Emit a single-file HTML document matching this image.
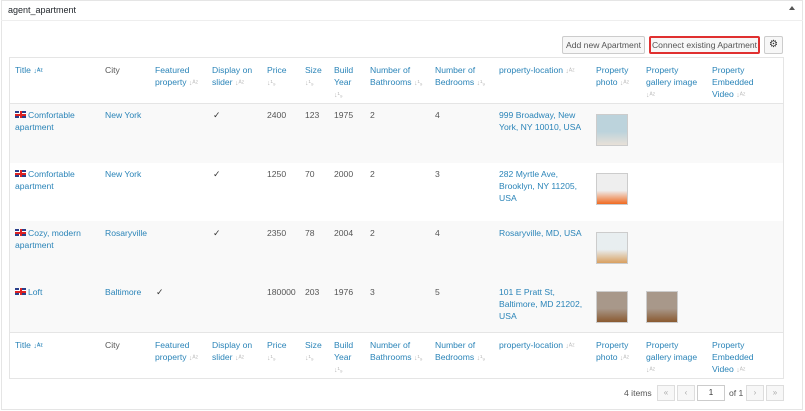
<!DOCTYPE html>
<html><head><style>
*{margin:0;padding:0;box-sizing:border-box}
body{width:805px;height:411px;background:#fff;font-family:"Liberation Sans",sans-serif;font-size:8.6px;color:#444;position:relative;overflow:hidden}
.a{position:absolute}
.panel{left:1px;top:0;width:802px;height:410px;border:1px solid #e5e5e5}
.hdr{left:1px;top:0;width:802px;height:21px;border-bottom:1px solid #eee}
.tbl{left:9px;top:57px;width:775px;height:322px;border:1px solid #e5e5e5}
.row{left:10px;width:773px}
.t{position:absolute;line-height:12px;color:#2a84b8}
.k{color:#555}
.s{color:#bbb;font-size:7px}
.btn{position:absolute;height:18px;border:1px solid #ccc;background:#f7f7f7;color:#555;line-height:16px;text-align:center;font-size:8.6px;border-radius:2px}
.th{position:absolute;width:32px;height:32px;border:1px solid #ccc}
.pg{position:absolute;top:385px;height:16px;width:18px;border:1px solid #ddd;background:#f7f7f7;color:#aaa;text-align:center;line-height:14px;font-size:8px}
</style></head><body>
<div class="a panel"></div>
<div class="a hdr"></div>
<div class="a" style="left:8px;top:5px;font-size:9px;color:#23282d">agent_apartment</div>
<div class="a" style="left:789px;top:6px;width:0;height:0;border-left:3px solid transparent;border-right:3px solid transparent;border-bottom:4px solid #555"></div>
<div class="btn" style="left:562px;top:36px;width:83px">Add new Apartment</div>
<div class="btn" style="left:649px;top:36px;width:111px;border:2px solid #e03030;line-height:14px">Connect existing Apartment</div>
<div class="btn" style="left:764px;top:36px;width:19px;font-size:10px;color:#333">⚙</div>
<div class="a tbl"></div>
<div class="a row" style="top:103px;height:60px;background:#f9f9f9;border-top:1px solid #e5e5e5"></div>
<div class="a row" style="top:221px;height:59px;background:#f9f9f9"></div>
<div class="a row" style="top:280px;height:53px;background:#f9f9f9;border-bottom:1px solid #e5e5e5"></div>

<div id="h1"></div>
<script>
function hdr(y){
 var c=[[15,'Title <b style="color:#2a84b8;font-size:7px">↓ᴬᶻ</b>',''],[105,'City','k'],[155,'Featured<br>property <span class=s>↓ᴬᶻ</span>',''],[212,'Display on<br>slider <span class=s>↓ᴬᶻ</span>',''],[267,'Price<br><span class=s>↓¹₉</span>',''],[305,'Size<br><span class=s>↓¹₉</span>',''],[334,'Build<br>Year<br><span class=s>↓¹₉</span>',''],[370,'Number of<br>Bathrooms <span class=s>↓¹₉</span>',''],[435,'Number of<br>Bedrooms <span class=s>↓¹₉</span>',''],[499,'property-location <span class=s>↓ᴬᶻ</span>',''],[596,'Property<br>photo <span class=s>↓ᴬᶻ</span>',''],[646,'Property<br>gallery image<br><span class=s>↓ᴬᶻ</span>',''],[712,'Property<br>Embedded<br>Video <span class=s>↓ᴬᶻ</span>','']];
 var h='';c.forEach(function(e){h+='<div class="t '+e[2]+'" style="left:'+e[0]+'px;top:'+y+'px">'+e[1]+'</div>'});return h;}
var flag='<span style="display:inline-block;width:11px;height:7px;background:#2a3f8a;position:relative;vertical-align:0;margin-right:2px;background-image:linear-gradient(90deg,transparent 4px,#fff 4px,#fff 7px,transparent 7px),linear-gradient(0deg,transparent 2px,#fff 2px,#fff 5px,transparent 5px);"><i style="position:absolute;left:4.5px;top:0;width:2px;height:7px;background:#d22"></i><i style="position:absolute;left:0;top:2.5px;width:11px;height:2px;background:#d22"></i></span>';
var rows=[[114,'Comfortable<br>apartment','New York','','✓','2400','123','1975','2','4','999 Broadway, New<br>York, NY 10010, USA',['#bcd3dc','#e8e0d8'],null],
[173,'Comfortable<br>apartment','New York','','✓','1250','70','2000','2','3','282 Myrtle Ave,<br>Brooklyn, NY 11205,<br>USA',['#eee','#f06a20'],null],
[232,'Cozy, modern<br>apartment','Rosaryville','','✓','2350','78','2004','2','4','Rosaryville, MD, USA',['#e8eef0','#d9a060'],null],
[291,'Loft','Baltimore','✓','','180000','203','1976','3','5','101 E Pratt St,<br>Baltimore, MD 21202,<br>USA',['#a8988a','#8a5a30'],1]];
var h=hdr(64)+hdr(339);
rows.forEach(function(r){var y=r[0];
 h+='<div class="t" style="left:15px;top:'+(y-5)+'px">'+flag+r[1]+'</div>';
 h+='<div class="t" style="left:105px;top:'+(y-5)+'px">'+r[2]+'</div>';
 if(r[3])h+='<div class="t k" style="left:156px;top:'+(y-5)+'px;font-size:9px;color:#333">✓</div>';
 if(r[4])h+='<div class="t k" style="left:213px;top:'+(y-5)+'px;font-size:9px;color:#333">✓</div>';
 [[267,5],[305,6],[334,7],[370,8],[435,9]].forEach(function(p){h+='<div class="t k" style="left:'+p[0]+'px;top:'+(y-5)+'px">'+r[p[1]]+'</div>'});
 h+='<div class="t" style="left:499px;top:'+(y-5)+'px">'+r[10]+'</div>';
 var g='linear-gradient(180deg,'+r[11][0]+' 55%,'+r[11][1]+' 100%)';
 h+='<div class="th" style="left:596px;top:'+y+'px;background:'+g+'"></div>';
 if(r[12])h+='<div class="th" style="left:646px;top:'+y+'px;background:'+g+'"></div>';
});
h+='<div class="t k" style="left:624px;top:387px;color:#555">4 items</div>';
h+='<div class="pg" style="left:657px">«</div><div class="pg" style="left:677px">‹</div>';
h+='<div class="pg" style="left:697px;width:28px;background:#fff;color:#333;border-color:#ccc">1</div>';
h+='<div class="t k" style="left:729px;top:387px;color:#555">of 1</div>';
h+='<div class="pg" style="left:746px">›</div><div class="pg" style="left:766px">»</div>';
document.getElementById('h1').innerHTML=h;
</script>
</body></html>
